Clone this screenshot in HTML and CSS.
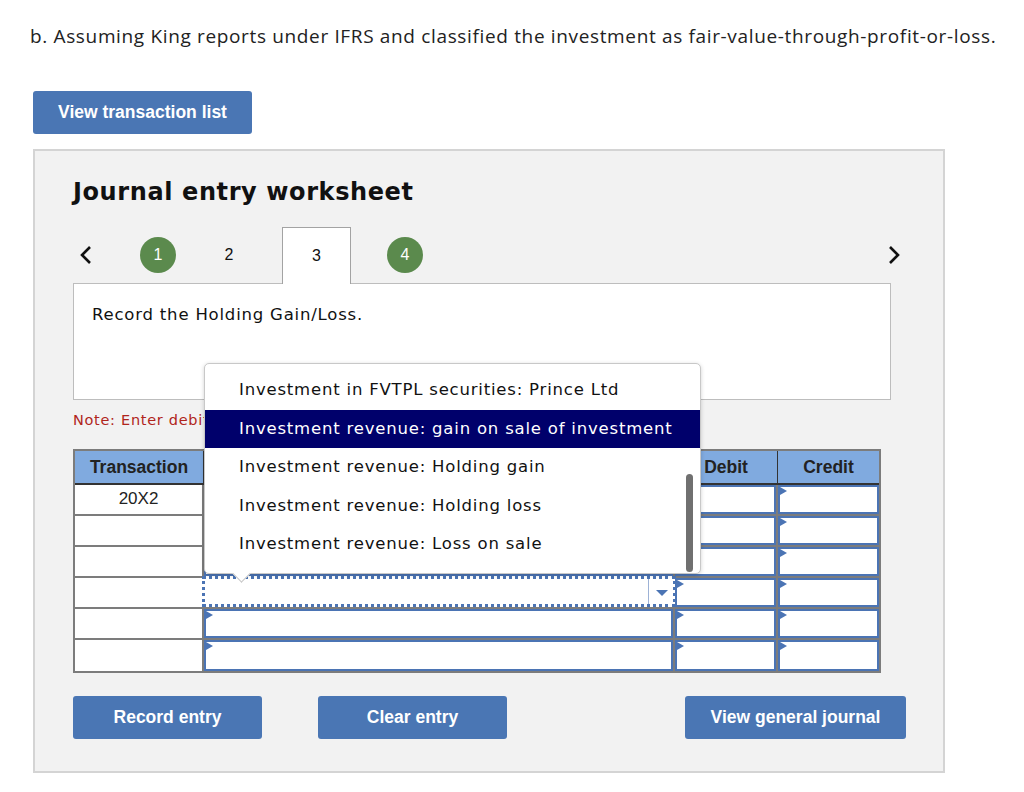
FILE: index.html
```html
<!DOCTYPE html>
<html>
<head>
<meta charset="utf-8">
<link rel="stylesheet" href="styles.css">
</head>
<body>
<p class="question">b. Assuming King reports under IFRS and classified the investment as fair-value-through-profit-or-loss.</p>
<button class="btn btn-list">View transaction list</button>
<section class="panel">
  <h2 class="title">Journal entry worksheet</h2>
  <div class="tabs">
    <span class="nav prev"><svg width="14" height="20" viewBox="0 0 14 20"><path d="M11 2 L3 10 L11 18" fill="none" stroke="#111" stroke-width="2.6"/></svg></span>
    <span class="tab t1"><span class="dot">1</span></span>
    <span class="tab t2">2</span>
    <span class="tab t3 active">3</span>
    <span class="tab t4"><span class="dot">4</span></span>
    <span class="nav next"><svg width="14" height="20" viewBox="0 0 14 20"><path d="M3 2 L11 10 L3 18" fill="none" stroke="#111" stroke-width="2.6"/></svg></span>
  </div>
  <div class="desc">Record the Holding Gain/Loss.</div>
  <p class="note">Note: Enter debits before credits.</p>
  <div class="table-wrap">
    <div class="grid">
      <div class="th">Transaction</div>
      <div class="th">General Journal</div>
      <div class="th">Debit</div>
      <div class="th">Credit</div>

      <div class="td tx">20X2</div>
      <div class="td"><div class="inp"></div></div>
      <div class="td"><div class="inp"></div></div>
      <div class="td"><div class="inp"></div></div>

      <div class="td tx"></div>
      <div class="td"><div class="inp"></div></div>
      <div class="td"><div class="inp"></div></div>
      <div class="td"><div class="inp"></div></div>

      <div class="td tx"></div>
      <div class="td"><div class="inp"></div></div>
      <div class="td"><div class="inp"></div></div>
      <div class="td"><div class="inp"></div></div>

      <div class="td tx"></div>
      <div class="td"><div class="select"><span class="caret"></span></div></div>
      <div class="td"><div class="inp"></div></div>
      <div class="td"><div class="inp"></div></div>

      <div class="td tx"></div>
      <div class="td"><div class="inp"></div></div>
      <div class="td"><div class="inp"></div></div>
      <div class="td"><div class="inp"></div></div>

      <div class="td tx"></div>
      <div class="td"><div class="inp"></div></div>
      <div class="td"><div class="inp"></div></div>
      <div class="td"><div class="inp"></div></div>
    </div>
    <div class="menu">
      <ul>
        <li>Investment in FVTPL securities: Prince Ltd</li>
        <li class="hl">Investment revenue: gain on sale of investment</li>
        <li>Investment revenue: Holding gain</li>
        <li>Investment revenue: Holding loss</li>
        <li>Investment revenue: Loss on sale</li>
      </ul>
      <span class="thumb"></span>
      <span class="tail"></span>
    </div>
  </div>
  <div class="actions">
    <button class="btn btn-rec">Record entry</button>
    <button class="btn btn-clr">Clear entry</button>
    <button class="btn btn-gj">View general journal</button>
  </div>
</section>
</body>
</html>
```

FILE: styles.css
```css
* { box-sizing: border-box; }
body {
  margin: 0;
  background: #fff;
  font-family: "Liberation Sans", Arial, sans-serif;
  color: #222;
}
.question {
  margin: 24px 0 0 30px;
  font-family: "Open Sans", "Liberation Sans", sans-serif;
  font-size: 19px;
  letter-spacing: 0.65px;
  line-height: 24px;
  color: #222;
  white-space: nowrap;
}
.btn {
  display: block;
  flex-shrink: 0;
  border: 0;
  border-radius: 3px;
  background: #4a76b4;
  color: #fff;
  font-family: "Liberation Sans", Arial, sans-serif;
  font-weight: bold;
  font-size: 17.5px;
  height: 43px;
  padding: 0;
}
.btn-list {
  margin: 43px 0 0 33px;
  width: 219px;
}
.panel {
  margin: 15px 0 0 33px;
  width: 912px;
  height: 624px;
  background: #f2f2f2;
  border: 2px solid #d4d4d4;
  padding: 0 52px 0 38px;
}
.title {
  margin: 26px 0 0 0;
  font-family: "DejaVu Sans", Verdana, sans-serif;
  font-weight: bold;
  font-size: 24px;
  letter-spacing: 0.6px;
  line-height: 30px;
  color: #111;
}
.tabs {
  display: flex;
  align-items: center;
  height: 56px;
  margin-top: 20px;
  position: relative;
  z-index: 2;
}
.nav { display: flex; align-items: center; }
.prev { width: 50px; padding-left: 6px; }
.next { margin-left: auto; margin-right: -10px; }
.tab {
  width: 70px;
  height: 56px;
  display: flex;
  align-items: center;
  justify-content: center;
  font-size: 16px;
  color: #111;
}
.t2 { margin-left: 1px; }
.t3 { margin-left: 18px; width: 69px; }
.t4 { margin-left: 19px; }
.active {
  background: #fff;
  border: 1px solid #a3a3a3;
  border-bottom: 0;
  height: 57px;
  margin-bottom: -1px;
  align-self: flex-start;
}
.dot {
  width: 36px;
  height: 36px;
  border-radius: 50%;
  background: #5b8a4d;
  color: #fff;
  display: flex;
  align-items: center;
  justify-content: center;
  font-size: 16px;
}
.desc {
  background: #fff;
  border: 1px solid #bdbdbd;
  height: 117px;
  padding: 21px 0 0 18px;
  font-family: "DejaVu Sans", Verdana, sans-serif;
  font-size: 16.5px;
  letter-spacing: 0.8px;
  line-height: 20px;
  color: #111;
}
.note {
  margin: 10px 0 0 0;
  font-family: "DejaVu Sans", Verdana, sans-serif;
  font-size: 14.5px;
  letter-spacing: 0.7px;
  line-height: 20px;
  color: #b0251c;
  white-space: nowrap;
}
.table-wrap {
  position: relative;
  margin-top: 19px;
  width: 808px;
}
.grid {
  display: grid;
  grid-template-columns: 129px 471px 103px 101px;
  grid-template-rows: 34px repeat(6, 31px);
  border: 2px solid #7c7c7c;
  background: #fff;
}
.th {
  background: #80aadf;
  border-right: 1px solid #333;
  border-bottom: 2px solid #333;
  display: flex;
  align-items: center;
  justify-content: center;
  font-weight: bold;
  font-size: 17.5px;
  color: #222;
}
.th:nth-child(4) { border-right: 0; }
.td {
  border-right: 2px solid #7c7c7c;
  border-bottom: 2px solid #7c7c7c;
  background: #fff;
}
.grid .td:nth-child(4n) { border-right: 0; }
.grid .td:nth-last-child(-n+4) { border-bottom: 0; }
.tx {
  font-size: 17px;
  text-align: center;
  padding-top: 4px;
  color: #222;
}
.inp {
  position: relative;
  height: 100%;
  border: 2px solid #4b74b4;
  background: #fff;
}
.inp::before {
  content: "";
  position: absolute;
  left: 0;
  top: 0;
  border-left: 7px solid #4b74b4;
  border-top: 4.5px solid transparent;
  border-bottom: 4.5px solid transparent;
}
.select {
  position: relative;
  border: 3px dotted #4b74b4;
  background: #fff;
  margin: -2px -3px 0 -2px;
  height: calc(100% + 2px);
}
.caret {
  position: absolute;
  right: 0;
  top: 0;
  bottom: 0;
  width: 25px;
  border-left: 1px solid #9db2d6;
}
.caret::after {
  content: "";
  position: absolute;
  left: 7px;
  top: 11px;
  border-top: 6px solid #4b74b4;
  border-left: 6px solid transparent;
  border-right: 6px solid transparent;
}
.menu {
  position: absolute;
  left: 131px;
  top: -86px;
  width: 497px;
  height: 211px;
  background: #fff;
  border: 1px solid #c8c8c8;
  border-radius: 5px;
  box-shadow: 0 1px 4px rgba(0,0,0,0.18);
  z-index: 5;
}
.menu ul {
  list-style: none;
  margin: 0;
  padding: 7px 0 0 0;
}
.menu li {
  height: 38.5px;
  line-height: 38px;
  padding-left: 34px;
  font-family: "DejaVu Sans", Verdana, sans-serif;
  font-size: 16.5px;
  letter-spacing: 0.8px;
  color: #111;
  white-space: nowrap;
}
.menu li.hl {
  background: #00006b;
  color: #fff;
}
.thumb {
  position: absolute;
  left: 481px;
  top: 110px;
  width: 7px;
  height: 98px;
  border-radius: 4px;
  background: #707070;
}
.tail {
  position: absolute;
  left: 30px;
  bottom: -7px;
  width: 13px;
  height: 13px;
  background: #fff;
  border-right: 1px solid #c8c8c8;
  border-bottom: 1px solid #c8c8c8;
  transform: rotate(45deg);
}
.actions {
  display: flex;
  margin-top: 23px;
}
.btn-rec { width: 189px; }
.btn-clr { width: 189px; margin-left: 56px; }
.btn-gj { width: 221px; margin-left: 178px; }
```
